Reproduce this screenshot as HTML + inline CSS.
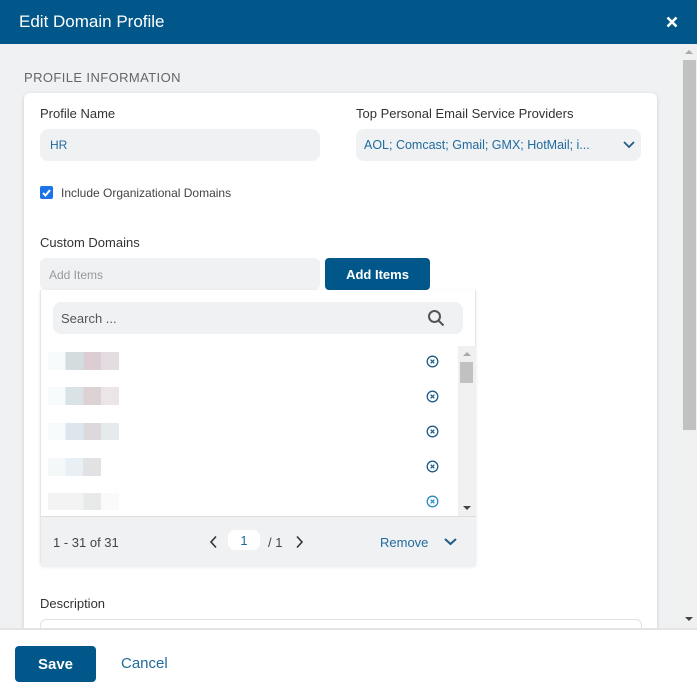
<!DOCTYPE html><html><head><style>
*{box-sizing:border-box;margin:0;padding:0}
body{width:697px;height:696px;overflow:hidden;font-family:"Liberation Sans",sans-serif;background:#fff;position:relative;font-size:13px;color:#333}
.a{position:absolute}
.hdr{left:0;top:0;width:697px;height:44px;background:#02578a;color:#fff;font-size:17px;line-height:44px;padding-left:19px}
.body{left:0;top:44px;width:697px;height:584px;background:#f0f1f3;overflow:hidden}
.card{left:24px;top:49px;width:633px;height:600px;background:#fff;border-radius:6px;box-shadow:0 1px 4px rgba(0,0,0,.15)}
.inp{background:#f0f1f3;border-radius:8px}
.blue{color:#1f6b9c}
</style></head><body>
<div class="a hdr">Edit Domain Profile<svg class="a" style="right:19px;top:16px" width="12" height="12"><path d="M1.5 1.5l9 9M10.5 1.5l-9 9" stroke="#fff" stroke-width="2.6"/></svg></div>
<div class="a body">
 <div class="a" style="left:24px;top:26px;font-size:13px;color:#666;letter-spacing:.4px">PROFILE INFORMATION</div>
 <div class="a card">
  <div class="a" style="left:16px;top:13px">Profile Name</div>
  <div class="a inp" style="left:16px;top:36px;width:280px;height:32px"><span class="a blue" style="left:10px;top:9px;font-size:12px">HR</span></div>
  <div class="a" style="left:332px;top:13px">Top Personal Email Service Providers</div>
  <div class="a inp" style="left:332px;top:36px;width:285px;height:32px"><span class="a blue" style="left:8px;top:9px;font-size:12.5px">AOL; Comcast; Gmail; GMX; HotMail; i...</span>
   <svg class="a" style="right:6px;top:11px" width="12" height="10"><path d="M1 2l5 5 5-5" stroke="#1f5c88" stroke-width="1.8" fill="none"/></svg></div>
  <div class="a" style="left:16px;top:93px;width:13px;height:13px;background:#1a73e8;border-radius:2px"><svg width="13" height="13"><path d="M3 7l2.5 2.5L10 4" stroke="#fff" stroke-width="2" fill="none"/></svg></div>
  <div class="a" style="left:37px;top:93px;font-size:12px;color:#444">Include Organizational Domains</div>
  <div class="a" style="left:16px;top:142px">Custom Domains</div>
  <div class="a inp" style="left:16px;top:165px;width:280px;height:32px;border-radius:6px"><span class="a" style="left:9px;top:10px;font-size:12px;color:#999">Add Items</span></div>
  <div class="a" style="left:301px;top:165px;width:105px;height:32px;background:#02578a;border-radius:4px;color:#fff;font-weight:bold;text-align:center;line-height:34px">Add Items</div>
  <div class="a" style="left:16px;top:197px;width:436px;height:276px;border:1px solid #e6e6e6;border-top:none;border-radius:0 0 4px 4px;box-shadow:0 1px 3px rgba(0,0,0,.1)">
   <div class="a inp" style="left:12px;top:12px;width:410px;height:32px"><span class="a" style="left:8px;top:9px;color:#555">Search ...</span>
    <svg class="a" style="right:18px;top:7px" width="18" height="18"><circle cx="7.5" cy="7.5" r="5.5" stroke="#555" stroke-width="2" fill="none"/><path d="M11.5 11.5l5 5" stroke="#555" stroke-width="2"/></svg></div>
   <div class="a" style="left:7px;top:62px;width:71px;height:18px;background:linear-gradient(90deg,#f6fafb 25%,#d3dcdf 25% 50%,#dbcdd1 50% 75%,#e3dde2 75%)"></div>
   <div class="a" style="left:7px;top:97px;width:71px;height:18px;background:linear-gradient(90deg,#f6fafb 25%,#d9e2e7 25% 50%,#dcd2d3 50% 75%,#ebe5e8 75%)"></div>
   <div class="a" style="left:7px;top:133px;width:71px;height:17px;background:linear-gradient(90deg,#f6fafb 25%,#dde6ed 25% 50%,#ddd8dc 50% 75%,#e5eaed 75%)"></div>
   <div class="a" style="left:7px;top:168px;width:53px;height:18px;background:linear-gradient(90deg,#f4f8f9 33%,#e8eff5 33% 66%,#e2e2e4 66%)"></div>
   <div class="a" style="left:7px;top:203px;width:71px;height:17px;background:linear-gradient(90deg,#f3f3f3 50%,#e8e9e9 50% 75%,#fafafa 75%)"></div>
   <svg class="a" style="left:385px;top:65px" width="13" height="13"><circle cx="6.5" cy="6.5" r="5.3" stroke="#1f5c88" stroke-width="1.3" fill="none"/><path d="M4.7 4.7l3.6 3.6M8.3 4.7l-3.6 3.6" stroke="#1f5c88" stroke-width="1.3"/></svg>
   <svg class="a" style="left:385px;top:100px" width="13" height="13"><circle cx="6.5" cy="6.5" r="5.3" stroke="#1f5c88" stroke-width="1.3" fill="none"/><path d="M4.7 4.7l3.6 3.6M8.3 4.7l-3.6 3.6" stroke="#1f5c88" stroke-width="1.3"/></svg>
   <svg class="a" style="left:385px;top:135px" width="13" height="13"><circle cx="6.5" cy="6.5" r="5.3" stroke="#1f5c88" stroke-width="1.3" fill="none"/><path d="M4.7 4.7l3.6 3.6M8.3 4.7l-3.6 3.6" stroke="#1f5c88" stroke-width="1.3"/></svg>
   <svg class="a" style="left:385px;top:170px" width="13" height="13"><circle cx="6.5" cy="6.5" r="5.3" stroke="#1f5c88" stroke-width="1.3" fill="none"/><path d="M4.7 4.7l3.6 3.6M8.3 4.7l-3.6 3.6" stroke="#1f5c88" stroke-width="1.3"/></svg>
   <svg class="a" style="left:385px;top:205px" width="13" height="13"><circle cx="6.5" cy="6.5" r="5.3" stroke="#2a8ac4" stroke-width="1.3" fill="none"/><path d="M4.7 4.7l3.6 3.6M8.3 4.7l-3.6 3.6" stroke="#2a8ac4" stroke-width="1.3"/></svg>
   <div class="a" style="left:417px;top:56px;width:18px;height:170px;background:#f0f0f0"><div class="a" style="left:2px;top:16px;width:13px;height:21px;background:#c1c1c1"></div><div class="a" style="left:5px;top:6px;border:4px solid transparent;border-bottom-color:#aaa;border-top:none"></div><div class="a" style="left:5px;top:160px;border:4px solid transparent;border-top-color:#444;border-bottom:none"></div></div>
   <div class="a" style="left:0;top:226px;width:435px;height:50px;background:#f0f1f3;border-top:1px solid #ddd">
    <span class="a" style="left:12px;top:18px;color:#444">1 - 31 of 31</span>
    <svg class="a" style="left:168px;top:18px" width="9" height="14"><path d="M7 1.5L2 7l5 5.5" stroke="#333" stroke-width="1.6" fill="none"/></svg>
    <div class="a" style="left:187px;top:13px;width:32px;height:20px;background:#fff;border-radius:7px;text-align:center;line-height:21px;color:#1f6b9c">1</div>
    <span class="a" style="left:227px;top:18px;color:#444">/ 1</span>
    <svg class="a" style="left:254px;top:18px" width="9" height="14"><path d="M2 1.5L7 7l-5 5.5" stroke="#333" stroke-width="1.6" fill="none"/></svg>
    <span class="a blue" style="left:339px;top:18px">Remove</span>
    <svg class="a" style="left:403px;top:20px" width="13" height="10"><path d="M1 2l5.5 5 5.5-5" stroke="#1f5c88" stroke-width="2" fill="none"/></svg>
   </div>
  </div>
  <div class="a" style="left:16px;top:503px">Description</div>
  <div class="a" style="left:16px;top:526px;width:602px;height:40px;border:1px solid #e3e3e3;border-radius:6px;background:#fff"></div>
 </div>
 <div class="a" style="left:681px;top:0;width:16px;height:584px;background:#f0f0f0"><div class="a" style="left:2px;top:16px;width:13px;height:370px;background:#c1c1c1"></div><div class="a" style="left:4px;top:6px;border:4px solid transparent;border-bottom-color:#aaa;border-top:none"></div><div class="a" style="left:4px;top:573px;border:4px solid transparent;border-top-color:#444;border-bottom:none"></div></div>
</div>
<div class="a" style="left:0;top:628px;width:697px;height:2px;background:#e3e3e3"></div>
<div class="a" style="left:15px;top:646px;width:81px;height:36px;background:#02578a;border-radius:4px;color:#fff;font-weight:bold;font-size:15px;text-align:center;line-height:37px">Save</div>
<div class="a" style="left:121px;top:655px;font-size:15px;color:#1f6b9c">Cancel</div>
</body></html>
